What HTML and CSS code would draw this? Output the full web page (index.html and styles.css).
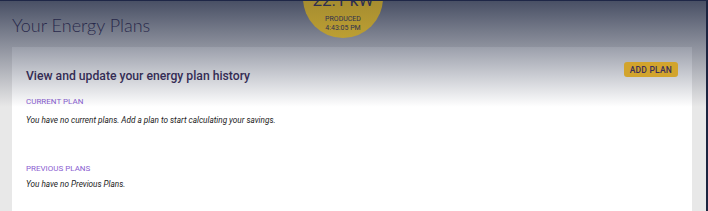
FILE: index.html
```html
<!DOCTYPE html>
<html lang="en">
<head>
  <meta charset="UTF-8">
  <meta name="viewport" content="width=device-width, initial-scale=1.0">
  <title>Your Energy Plans</title>
  <link rel="stylesheet" href="styles.css">
</head>
<body>
  <div class="page">
    <h1 class="page-title">Your Energy Plans</h1>

    <div class="plans-card">
      <div class="card-head">
        <h2>View and update your energy plan history</h2>
        <button class="add-btn">ADD PLAN</button>
      </div>

      <div class="plan-section">
        <h3>CURRENT PLAN</h3>
        <p>You have no current plans. Add a plan to start calculating your savings.</p>
      </div>

      <div class="plan-section previous">
        <h3>PREVIOUS PLANS</h3>
        <p>You have no Previous Plans.</p>
      </div>
    </div>

    <div class="shade"></div>

    <div class="produced-badge">
      <div class="kw">22.1 kW</div>
      <div class="label">PRODUCED</div>
      <div class="label">4:43:05 PM</div>
    </div>
  </div>
</body>
</html>
```

FILE: styles.css
```css
body {
    margin: 0;
    padding: 0;
    background-color: #e8e8e8;
    font-family: Roboto, "Liberation Sans", sans-serif;
}

.page {
    position: relative;
    height: 211px;
    box-sizing: border-box;
    border-top: 1px solid #1f2747;
    border-right: 2px solid #1c2440;
    padding: 0 14px 0 12px;
    overflow: hidden;
}

.page-title {
    margin: 0;
    height: 46px;
    padding-top: 13px;
    box-sizing: border-box;
    font-family: Lato, sans-serif;
    font-weight: 300;
    font-size: 18px;
    color: #3b2e5a;
    line-height: 22px;
}

.plans-card {
    background-color: #fff;
    padding: 15px 14px 20px 14px;
    min-height: 180px;
}

.card-head {
    display: flex;
    justify-content: space-between;
    align-items: flex-start;
}

.card-head h2 {
    margin: 7px 0 0 0;
    font-size: 12.2px;
    font-weight: 500;
    color: #3b2e5a;
}

/* sits above the shade, it keeps its full colour in the reference */
.add-btn {
    position: relative;
    z-index: 2;
    background-color: #d2a42d;
    color: #3b2e5a;
    border: none;
    border-radius: 3px;
    font-family: Roboto, sans-serif;
    font-weight: 500;
    font-size: 8.5px;
    padding: 0 6px;
    height: 15px;
    letter-spacing: 0.2px;
}

.plan-section h3 {
    margin: 14px 0 0 0;
    font-size: 8px;
    font-weight: 400;
    color: #8b5ed1;
    line-height: 10px;
}

.plan-section p {
    margin: 8px 0 0 0;
    font-size: 8.2px;
    font-style: italic;
    color: #222;
    line-height: 10px;
}

.plan-section.previous h3 {
    margin-top: 39px;
}

.plan-section.previous p {
    margin-top: 5px;
}

/* fading shade across the top of the page */
.shade {
    position: absolute;
    left: 0;
    right: 0;
    top: 0;
    height: 106px;
    background: linear-gradient(to bottom, rgba(28, 37, 64, 0.78), rgba(28, 37, 64, 0));
    pointer-events: none;
}

.produced-badge {
    position: absolute;
    left: 303px;
    top: -43px;
    width: 80px;
    height: 80px;
    border-radius: 50%;
    background: linear-gradient(to bottom, #8a772c, #bd9f33);
    text-align: center;
    color: #2f3050;
    box-sizing: border-box;
    padding-top: 33px;
}

.produced-badge .kw {
    font-size: 17px;
    line-height: 18px;
    margin-bottom: 6px;
}

.produced-badge .label {
    font-size: 7px;
    line-height: 9px;
}
```
